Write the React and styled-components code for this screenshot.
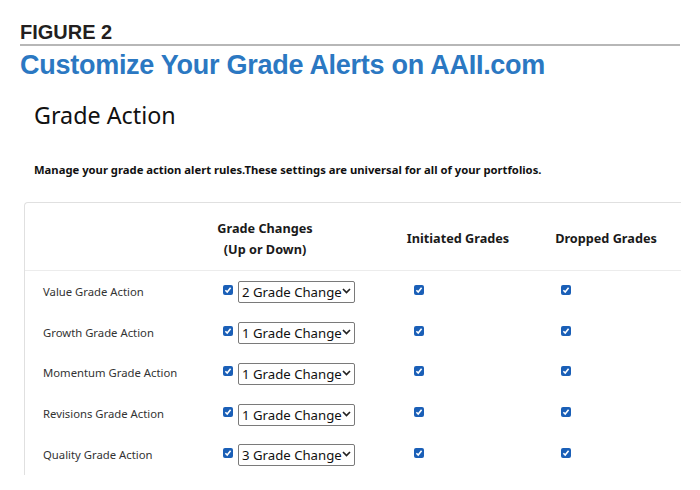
import React from 'react'
import styled, { createGlobalStyle } from 'styled-components'

const GlobalStyle = createGlobalStyle`
  body {
    margin: 0;
    background: #ffffff;
  }
`

const uiFont = `"Noto Sans", "Open Sans", sans-serif`

const Page = styled.div`
  width: 700px;
  height: 490px;
  overflow: hidden;
  box-sizing: border-box;
  padding: 0 20px;
  background: #ffffff;
`

const FigureLabel = styled.div`
  font-family: "Liberation Sans", Arial, sans-serif;
  font-weight: 700;
  font-size: 20px;
  line-height: 20px;
  color: #231f20;
  padding-top: 22px;
`

const Rule = styled.div`
  height: 2px;
  background: #b7b7b7;
  margin-top: 2px;
`

const Title = styled.h1`
  margin: 0;
  font-family: "Liberation Sans", Arial, sans-serif;
  font-weight: 700;
  font-size: 27px;
  line-height: 30px;
  letter-spacing: -0.27px;
  color: #2b78c2;
  padding-top: 4px;
`

const Section = styled.div`
  padding-left: 4px;
`

const Heading = styled.h2`
  margin: 0;
  padding: 19px 0 0 10px;
  font-family: ${uiFont};
  font-weight: 400;
  font-size: 23.3px;
  line-height: 32px;
  color: #111111;
`

const Description = styled.p`
  margin: 0;
  padding: 30px 0 0 10px;
  font-family: ${uiFont};
  font-weight: 700;
  font-size: 11.25px;
  line-height: 18px;
  color: #111111;
`

const Card = styled.div`
  margin-top: 23px;
  width: 656px;
  border: 1px solid #e0e0e0;
  border-right: none;
  border-bottom: none;
  border-top-left-radius: 4px;
  font-family: ${uiFont};
`

const HeaderRow = styled.div`
  display: grid;
  grid-template-columns: 125px 230px 156px 140px;
  align-items: center;
  height: 67px;
  border-bottom: 1px solid #ececec;
`

const HeaderCell = styled.div`
  text-align: center;
  font-weight: 700;
  font-size: 12.7px;
  line-height: 21px;
  color: #1a1a1a;
  padding-top: ${(p) => (p.$double ? '4px' : '3px')};
`

const Row = styled.div`
  display: grid;
  grid-template-columns: 198px 191px 147px 1fr;
  align-items: center;
  height: 40.75px;
`

const Label = styled.div`
  padding-left: 18px;
  font-size: 11.3px;
  color: #333333;
  white-space: nowrap;
`

const Cell = styled.div`
  display: flex;
  align-items: center;
  gap: 5px;
`

const Box = styled.span`
  display: inline-flex;
  align-items: center;
  justify-content: center;
  width: 10px;
  height: 10px;
  border-radius: 2px;
  background: #1a5fb7;
  margin-top: -3px;
`

const SelectWrap = styled.div`
  position: relative;
  width: 117px;
  height: 22px;
`

const Select = styled.select`
  appearance: none;
  width: 100%;
  height: 100%;
  box-sizing: border-box;
  margin: 0;
  padding: 0 0 0 3px;
  border: 1px solid #7a7a7a;
  border-radius: 2px;
  background: #ffffff;
  font-family: ${uiFont};
  font-size: 13.2px;
  color: #111111;
  outline: none;
`

const Chevron = styled.svg`
  position: absolute;
  right: 4px;
  top: 8px;
  pointer-events: none;
`

const Checkbox = () => (
  <Box>
    <svg width="8" height="8" viewBox="0 0 8 8">
      <path d="M1.4 4.2 L3.2 6 L6.6 1.8" fill="none" stroke="#ffffff" strokeWidth="1.6" />
    </svg>
  </Box>
)

const GradeSelect = ({ value }) => (
  <SelectWrap>
    <Select defaultValue={value}>
      {[1, 2, 3, 4].map((n) => (
        <option key={n} value={n}>
          {n} Grade Change
        </option>
      ))}
    </Select>
    <Chevron width="9" height="6" viewBox="0 0 9 6">
      <path d="M1 1 L4.5 4.5 L8 1" fill="none" stroke="#222222" strokeWidth="1.7" />
    </Chevron>
  </SelectWrap>
)

const rules = [
  { name: 'Value Grade Action', change: 2 },
  { name: 'Growth Grade Action', change: 1 },
  { name: 'Momentum Grade Action', change: 1 },
  { name: 'Revisions Grade Action', change: 1 },
  { name: 'Quality Grade Action', change: 3 },
]

const App = () => {
  return (
    <Page>
      <GlobalStyle />
      <FigureLabel>FIGURE 2</FigureLabel>
      <Rule />
      <Title>Customize Your Grade Alerts on AAII.com</Title>
      <Section>
        <Heading>Grade Action</Heading>
        <Description>
          Manage your grade action alert rules.These settings are universal for all of your portfolios.
        </Description>
        <Card>
          <HeaderRow>
            <div />
            <HeaderCell $double>
              Grade Changes
              <br />
              (Up or Down)
            </HeaderCell>
            <HeaderCell>Initiated Grades</HeaderCell>
            <HeaderCell>Dropped Grades</HeaderCell>
          </HeaderRow>
          {rules.map((rule) => (
            <Row key={rule.name}>
              <Label>{rule.name}</Label>
              <Cell>
                <Checkbox />
                <GradeSelect value={rule.change} />
              </Cell>
              <Cell>
                <Checkbox />
              </Cell>
              <Cell>
                <Checkbox />
              </Cell>
            </Row>
          ))}
        </Card>
      </Section>
    </Page>
  )
}

export default App
